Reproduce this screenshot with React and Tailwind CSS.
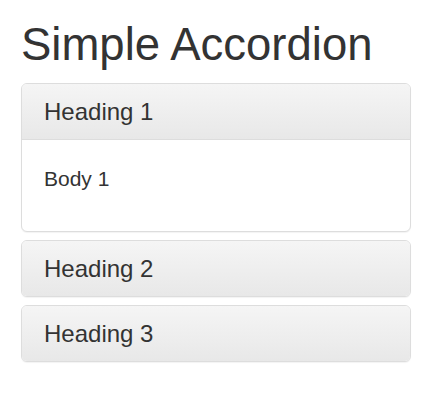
import { useState } from "react";

const panels = [
  { id: 1, title: "Heading 1", body: "Body 1" },
  { id: 2, title: "Heading 2", body: "Body 2" },
  { id: 3, title: "Heading 3", body: "Body 3" }
];

function Panel({ panel, open, onToggle }) {
  return (
    <div className="overflow-hidden rounded-[6px] border border-[#dddddd] bg-white shadow-[0_1px_1px_rgba(0,0,0,0.05)]">
      <button
        type="button"
        onClick={onToggle}
        className={`block w-full bg-gradient-to-b from-[#f5f5f5] to-[#e8e8e8] px-[22px] py-[15px] text-left text-[24px] leading-[25px] text-[#333333] ${
          open ? "border-b border-[#dddddd]" : ""
        }`}
      >
        {panel.title}
      </button>
      {open ? (
        <div className="px-[22px] pt-[24px] pb-[23px] text-[21px] leading-[29px] text-[#333333]">
          <p className="mb-[15px]">{panel.body}</p>
        </div>
      ) : null}
    </div>
  );
}

export default function App() {
  const [openId, setOpenId] = useState(1);

  return (
    <div className="min-h-[400px] bg-white pl-[21px] pr-[18px] font-['Liberation_Sans',Arial,sans-serif]">
      <h2 className="pt-[21px] pb-[14px] text-[45.5px] leading-[48px] text-[#333333]">Simple Accordion</h2>
      <div className="flex flex-col gap-[8px]">
        {panels.map((panel) => (
          <Panel
            key={panel.id}
            panel={panel}
            open={openId === panel.id}
            onToggle={() => setOpenId(openId === panel.id ? null : panel.id)}
          />
        ))}
      </div>
    </div>
  );
}
